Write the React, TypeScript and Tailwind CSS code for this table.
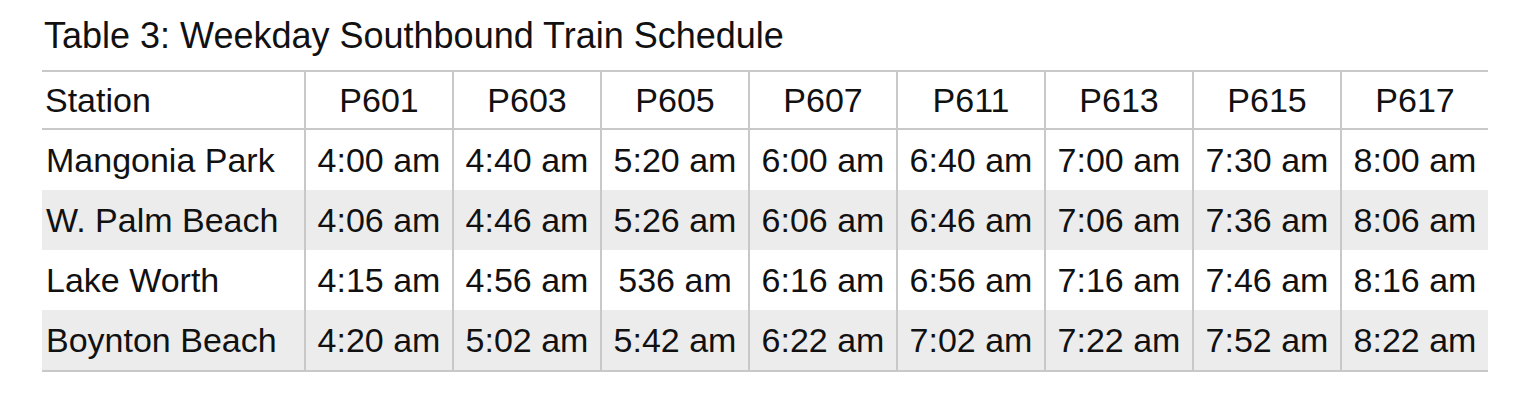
const trains = ["P601", "P603", "P605", "P607", "P611", "P613", "P615", "P617"]

const rows = [
  { station: "Mangonia Park", times: ["4:00 am", "4:40 am", "5:20 am", "6:00 am", "6:40 am", "7:00 am", "7:30 am", "8:00 am"] },
  { station: "W. Palm Beach", times: ["4:06 am", "4:46 am", "5:26 am", "6:06 am", "6:46 am", "7:06 am", "7:36 am", "8:06 am"] },
  { station: "Lake Worth", times: ["4:15 am", "4:56 am", "536 am", "6:16 am", "6:56 am", "7:16 am", "7:46 am", "8:16 am"] },
  { station: "Boynton Beach", times: ["4:20 am", "5:02 am", "5:42 am", "6:22 am", "7:02 am", "7:22 am", "7:52 am", "8:22 am"] },
]

export default function App() {
  return (
    <div className="w-[1536px] h-[415px] bg-white text-[#111] font-['Liberation_Sans',Arial,sans-serif]">
      {/* Caption */}
      <div className="pt-[18px] pl-[44px] text-[36px] leading-[36px]">
        Table 3: Weekday Southbound Train Schedule
      </div>

      {/* Table */}
      <div className="mt-[16px] ml-[42px] w-[1446px] border-t-2 border-b-2 border-[#c8c8c8] text-[34px]">
        {/* Header */}
        <div className="grid grid-cols-[262px_repeat(8,148px)] h-[58px] border-b-2 border-[#c8c8c8]">
          <div className="flex items-center pl-[3px]">Station</div>
          {trains.map((t) => (
            <div key={t} className="flex items-center justify-center border-l-2 border-[#c8c8c8]">
              {t}
            </div>
          ))}
        </div>

        {/* Body */}
        {rows.map((r, i) => (
          <div
            key={r.station}
            className={`grid grid-cols-[262px_repeat(8,148px)] h-[60px] ${i % 2 === 1 ? "bg-[#ececec]" : "bg-white"}`}
          >
            <div className="flex items-center pl-[4px]">{r.station}</div>
            {r.times.map((time, j) => (
              <div key={j} className="flex items-center justify-center border-l-2 border-[#c8c8c8]">
                {time}
              </div>
            ))}
          </div>
        ))}
      </div>
    </div>
  )
}
